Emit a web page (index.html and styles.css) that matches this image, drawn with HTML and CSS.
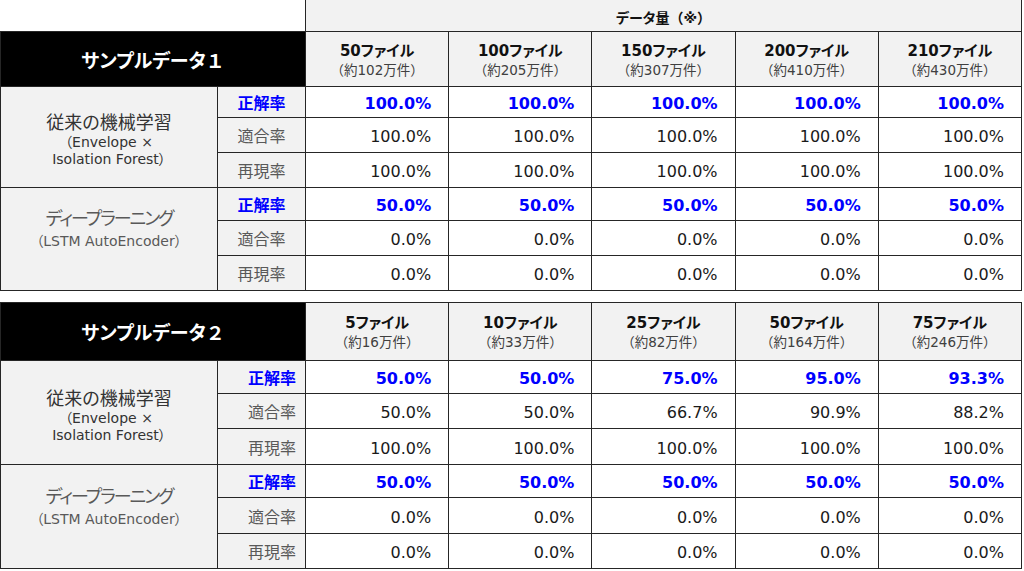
FILE: index.html
```html
<!DOCTYPE html>
<html lang="ja">
<head>
<meta charset="utf-8">
<title>データ量比較</title>
<link rel="stylesheet" href="styles.css">
</head>
<body>
<table class="grid t1">
  <colgroup>
    <col class="c-group"><col class="c-metric">
    <col class="c-data"><col class="c-data"><col class="c-data"><col class="c-data"><col class="c-data">
  </colgroup>
  <tr class="r-top">
    <td class="blank" colspan="2"></td>
    <th class="amount" colspan="5">データ量<span class="wide">（※）</span></th>
  </tr>
  <tr class="r-head1">
    <th class="title" colspan="2">サンプルデータ<span class="wide">１</span></th>
    <th class="col-head"><span class="files">50ファイル</span><span class="rows">（約102万件）</span></th>
    <th class="col-head"><span class="files">100ファイル</span><span class="rows">（約205万件）</span></th>
    <th class="col-head"><span class="files">150ファイル</span><span class="rows">（約307万件）</span></th>
    <th class="col-head"><span class="files">200ファイル</span><span class="rows">（約410万件）</span></th>
    <th class="col-head"><span class="files">210ファイル</span><span class="rows">（約430万件）</span></th>
  </tr>
  <tr class="r-acc1">
    <th class="group" rowspan="3"><span class="gname">従来の機械学習</span><span class="gsub dark">（Envelope ×<br>Isolation Forest）</span></th>
    <th class="metric acc">正解率</th>
    <td class="val acc">100.0%</td><td class="val acc">100.0%</td><td class="val acc">100.0%</td><td class="val acc">100.0%</td><td class="val acc">100.0%</td>
  </tr>
  <tr class="r-std">
    <th class="metric">適合率</th>
    <td class="val">100.0%</td><td class="val">100.0%</td><td class="val">100.0%</td><td class="val">100.0%</td><td class="val">100.0%</td>
  </tr>
  <tr class="r-std">
    <th class="metric">再現率</th>
    <td class="val">100.0%</td><td class="val">100.0%</td><td class="val">100.0%</td><td class="val">100.0%</td><td class="val">100.0%</td>
  </tr>
  <tr class="r-acc2">
    <th class="group deep" rowspan="3"><span class="gname kana">ディープラーニング</span><span class="gsub">（LSTM AutoEncoder）</span></th>
    <th class="metric acc">正解率</th>
    <td class="val acc">50.0%</td><td class="val acc">50.0%</td><td class="val acc">50.0%</td><td class="val acc">50.0%</td><td class="val acc">50.0%</td>
  </tr>
  <tr class="r-std">
    <th class="metric">適合率</th>
    <td class="val">0.0%</td><td class="val">0.0%</td><td class="val">0.0%</td><td class="val">0.0%</td><td class="val">0.0%</td>
  </tr>
  <tr class="r-std">
    <th class="metric">再現率</th>
    <td class="val">0.0%</td><td class="val">0.0%</td><td class="val">0.0%</td><td class="val">0.0%</td><td class="val">0.0%</td>
  </tr>
</table>

<table class="grid t2">
  <colgroup>
    <col class="c-group"><col class="c-metric">
    <col class="c-data"><col class="c-data"><col class="c-data"><col class="c-data"><col class="c-data">
  </colgroup>
  <tr class="r-head2">
    <th class="title" colspan="2">サンプルデータ<span class="wide">２</span></th>
    <th class="col-head"><span class="files">5ファイル</span><span class="rows">（約16万件）</span></th>
    <th class="col-head"><span class="files">10ファイル</span><span class="rows">（約33万件）</span></th>
    <th class="col-head"><span class="files">25ファイル</span><span class="rows">（約82万件）</span></th>
    <th class="col-head"><span class="files">50ファイル</span><span class="rows">（約164万件）</span></th>
    <th class="col-head"><span class="files">75ファイル</span><span class="rows">（約246万件）</span></th>
  </tr>
  <tr class="r-acc2">
    <th class="group" rowspan="3"><span class="gname">従来の機械学習</span><span class="gsub dark">（Envelope ×<br>Isolation Forest）</span></th>
    <th class="metric acc right">正解率</th>
    <td class="val acc">50.0%</td><td class="val acc">50.0%</td><td class="val acc">75.0%</td><td class="val acc">95.0%</td><td class="val acc">93.3%</td>
  </tr>
  <tr class="r-std">
    <th class="metric right">適合率</th>
    <td class="val">50.0%</td><td class="val">50.0%</td><td class="val">66.7%</td><td class="val">90.9%</td><td class="val">88.2%</td>
  </tr>
  <tr class="r-tall">
    <th class="metric right">再現率</th>
    <td class="val">100.0%</td><td class="val">100.0%</td><td class="val">100.0%</td><td class="val">100.0%</td><td class="val">100.0%</td>
  </tr>
  <tr class="r-acc2">
    <th class="group deep" rowspan="3"><span class="gname kana">ディープラーニング</span><span class="gsub">（LSTM AutoEncoder）</span></th>
    <th class="metric acc right">正解率</th>
    <td class="val acc">50.0%</td><td class="val acc">50.0%</td><td class="val acc">50.0%</td><td class="val acc">50.0%</td><td class="val acc">50.0%</td>
  </tr>
  <tr class="r-tall">
    <th class="metric right">適合率</th>
    <td class="val">0.0%</td><td class="val">0.0%</td><td class="val">0.0%</td><td class="val">0.0%</td><td class="val">0.0%</td>
  </tr>
  <tr class="r-std">
    <th class="metric right">再現率</th>
    <td class="val">0.0%</td><td class="val">0.0%</td><td class="val">0.0%</td><td class="val">0.0%</td><td class="val">0.0%</td>
  </tr>
</table>
</body>
</html>
```
FILE: styles.css
```css
html, body {
  margin: 0;
  padding: 0;
  background: #ffffff;
}
body {
  font-family: "DejaVu Sans", "Noto Sans CJK JP", sans-serif;
  font-feature-settings: "palt";
  color: #1a1a1a;
}
.grid {
  border-collapse: collapse;
  table-layout: fixed;
  width: 1021px;
}
.t2 {
  margin-top: 11px;
}
.c-group { width: 217px; }
.c-metric { width: 88px; }
.c-data { width: 143.2px; }

.grid th, .grid td {
  border: 1px solid #262626;
  padding: 4px 0 0 0;
  font-weight: normal;
  line-height: 1;
  vertical-align: middle;
}
.grid .blank {
  border-top: none;
  border-left: none;
  background: #ffffff;
}
.wide {
  font-feature-settings: normal;
}
.amount {
  background: #f2f2f2;
  border-top: none !important;
  font-weight: bold !important;
  font-size: 14px;
  color: #111;
  text-align: center;
}
.title {
  background: #000000;
  color: #ffffff;
  font-weight: bold !important;
  font-size: 19px;
  text-align: center;
}
.grid .col-head {
  background: #f2f2f2;
  text-align: center;
  padding-top: 2px;
}
.files {
  display: block;
  font-weight: bold;
  font-size: 15px;
  color: #111;
  line-height: 19px;
}
.rows {
  display: block;
  font-size: 13.5px;
  color: #404040;
  line-height: 18px;
  font-feature-settings: normal;
}
.grid .group {
  background: #f2f2f2;
  text-align: center;
  padding-top: 6px;
}
.grid .group.deep {
  padding-top: 4px;
  padding-bottom: 24px;
}
.gname {
  display: block;
  font-size: 18px;
  color: #333333;
  line-height: 22px;
}
.gname.kana {
  color: #595959;
  letter-spacing: -2px;
  margin-bottom: 3px;
}
.gsub {
  display: block;
  font-size: 14px;
  color: #595959;
  line-height: 17px;
}
.gsub.dark {
  color: #333333;
}
.metric {
  background: #f2f2f2;
  font-size: 16px;
  color: #595959;
  text-align: center;
}
.grid .metric.right {
  text-align: right;
  padding-right: 9px;
}
.metric.acc {
  color: #0000ff;
  font-weight: bold !important;
}
.grid .val {
  background: #ffffff;
  text-align: right;
  padding-right: 17px;
  font-size: 16px;
  color: #1a1a1a;
}
.val.acc {
  color: #0000ff;
  font-weight: bold;
}

.r-top td, .r-top th { height: 27px; }
.r-head1 th { height: 50px; }
.r-head2 th { height: 53px; }
.r-acc1 th, .r-acc1 td { height: 26px; }
.r-acc2 th, .r-acc2 td { height: 28px; }
.r-std th, .r-std td { height: 30px; }
.r-tall th, .r-tall td { height: 31px; }
```
